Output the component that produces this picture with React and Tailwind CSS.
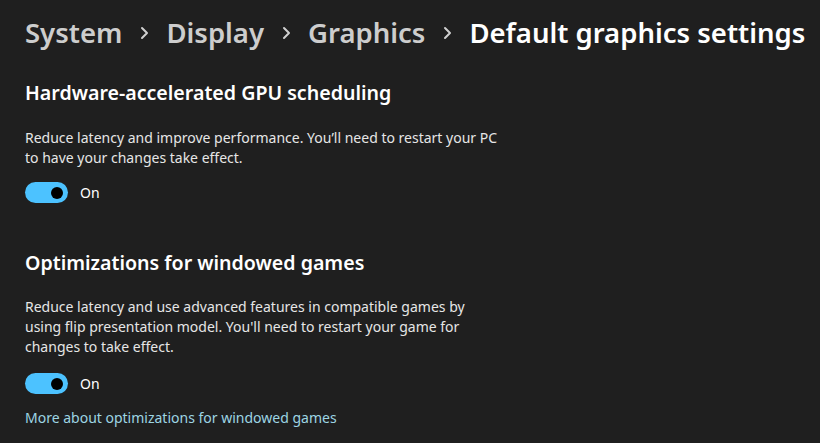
import React from 'react';

function Chevron() {
  return (
    <svg viewBox="0 0 16 16" className="w-[16px] h-[16px] mx-[14px] text-[#cfcfcf]" fill="none" stroke="currentColor" strokeWidth="2" strokeLinecap="round" strokeLinejoin="round">
      <path d="M6 3 11 8 6 13" />
    </svg>
  );
}

function Toggle({ label }) {
  return (
    <div className="flex items-center gap-[12px]">
      <div className="w-[43px] h-[21px] rounded-full bg-[#4cc2ff] flex items-center justify-end pr-[5px]">
        <div className="w-[12px] h-[12px] rounded-full bg-black" />
      </div>
      <span className="text-[14px] text-white">{label}</span>
    </div>
  );
}

export default function App() {
  return (
    <div className="w-[820px] h-[443px] bg-[#1f1f1f] text-white overflow-hidden pl-[25px] pt-[13px]" style={{ fontFamily: '"Noto Sans", "Open Sans", sans-serif' }}>
      {/* Breadcrumb */}
      <div className="flex items-center text-[27.5px] leading-[40px] whitespace-nowrap font-semibold">
        <span className="text-[#cdcdcd]">System</span>
        <Chevron />
        <span className="text-[#cdcdcd]">Display</span>
        <Chevron />
        <span className="text-[#cdcdcd]">Graphics</span>
        <Chevron />
        <span className="text-white">Default graphics settings</span>
      </div>

      {/* GPU scheduling */}
      <h2 className="mt-[26px] text-[19.6px] leading-[28px] font-semibold">Hardware-accelerated GPU scheduling</h2>
      <p className="mt-[21px] text-[14px] leading-[20px] text-[#e6e6e6] w-[480px]">
        Reduce latency and improve performance. You’ll need to restart your PC to have your changes take effect.
      </p>
      <div className="mt-[14px]">
        <Toggle label="On" />
      </div>

      {/* Windowed games */}
      <h2 className="mt-[46px] text-[19.6px] leading-[28px] font-semibold">Optimizations for windowed games</h2>
      <p className="mt-[20px] text-[14px] leading-[20px] text-[#e6e6e6] w-[450px]">
        Reduce latency and use advanced features in compatible games by using flip presentation model. You'll need to restart your game for changes to take effect.
      </p>
      <div className="mt-[16px]">
        <Toggle label="On" />
      </div>
      <a className="block mt-[14px] text-[14px] leading-[20px] text-[#9dd5e3]">More about optimizations for windowed games</a>
    </div>
  );
}
